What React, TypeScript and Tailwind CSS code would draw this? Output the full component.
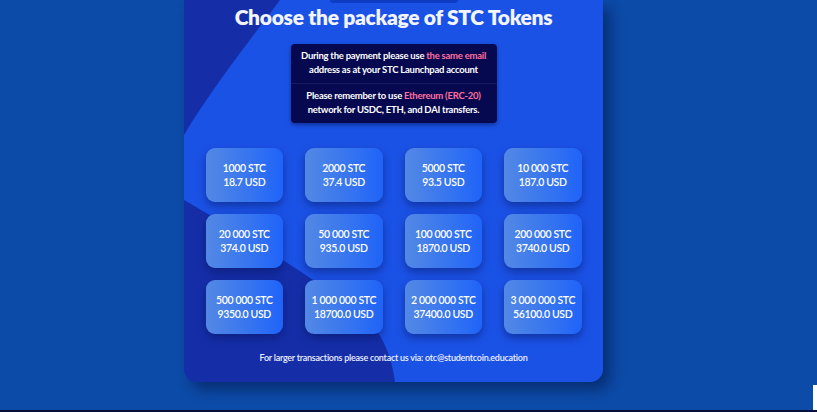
const packages = [
  ['1000 STC', '18.7 USD'],
  ['2000 STC', '37.4 USD'],
  ['5000 STC', '93.5 USD'],
  ['10 000 STC', '187.0 USD'],
  ['20 000 STC', '374.0 USD'],
  ['50 000 STC', '935.0 USD'],
  ['100 000 STC', '1870.0 USD'],
  ['200 000 STC', '3740.0 USD'],
  ['500 000 STC', '9350.0 USD'],
  ['1 000 000 STC', '18700.0 USD'],
  ['2 000 000 STC', '37400.0 USD'],
  ['3 000 000 STC', '56100.0 USD'],
];

function PackageButton({ amount, price }: { amount: string; price: string }) {
  return (
    <button className="flex h-[54px] flex-col items-center justify-center rounded-[9px] bg-gradient-to-r from-[#5388e4] to-[#1f63f8] text-[10.5px] leading-[14px] font-semibold tracking-[-0.35px] text-white shadow-[0_4px_9px_rgba(5,15,80,0.45)]">
      <span>{amount}</span>
      <span>{price}</span>
    </button>
  );
}

export default function App() {
  return (
    <div
      className="relative flex h-[412px] w-full overflow-hidden border-b-2 border-[#04103a] bg-[#0c4ba8] pl-[184px]"
      style={{ fontFamily: 'Lato, "Noto Sans", sans-serif' }}
    >
      <div className="relative h-[382px] w-[419px] overflow-hidden rounded-b-[13px] bg-[#152ea8] shadow-[7px_8px_14px_rgba(2,10,50,0.45)]">
        <svg className="absolute inset-0" width="419" height="382" viewBox="0 0 419 382">
          <path
            d="M96 0 C70 35 30 85 0 135 L0 200 C60 235 150 290 186 322 C200 338 208 358 211 382 L419 382 L419 0 Z"
            fill="#1b52e6"
          />
        </svg>

        <div className="relative flex flex-col items-center">
          <div className="h-[3px] w-[128px] rounded-b-md bg-[#0e3cc2]" />
          <h1 className="mt-[1px] text-[21px] leading-[26px] font-extrabold tracking-[-0.3px] text-[#f2f4ff]">
            Choose the package of STC Tokens
          </h1>

          <div className="mt-[14px] w-[206px] rounded-[4px] bg-[#06094f] text-center text-[9.5px] leading-[14px] font-bold tracking-[-0.25px] text-white shadow-[0_2px_4px_rgba(0,0,40,0.4)]">
            <p className="px-1 pt-[5px] pb-[6px]">
              During the payment please use <span className="text-[#ff6fa0]">the same email</span>
              <br />
              address as at your STC Launchpad account
            </p>
            <div className="h-px bg-[#141a64]" />
            <p className="px-1 pt-[5px] pb-[6px]">
              Please remember to use <span className="text-[#ff6fa0]">Ethereum (ERC-20)</span>
              <br />
              network for USDC, ETH, and DAI transfers.
            </p>
          </div>

          <div className="mt-[25px] grid w-[376px] grid-cols-4 gap-x-[22px] gap-y-[12px]">
            {packages.map(([amount, price]) => (
              <PackageButton key={amount} amount={amount} price={price} />
            ))}
          </div>

          <p className="mt-[17px] text-[9px] leading-[14px] font-semibold tracking-[-0.25px] text-[#eef1ff]">
            For larger transactions please contact us via: otc@studentcoin.education
          </p>
        </div>
      </div>

      <div className="absolute right-0 bottom-0 h-[25px] w-[4px] bg-white" />
    </div>
  );
}
